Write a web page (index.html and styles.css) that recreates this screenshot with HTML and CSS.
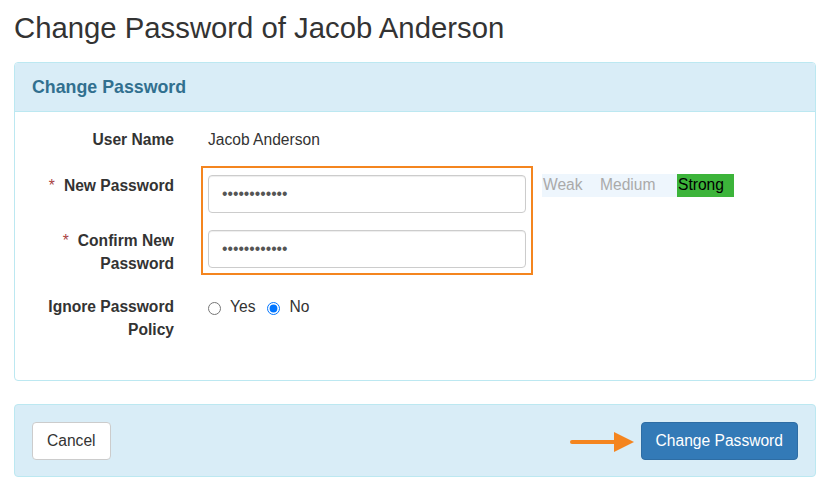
FILE: index.html
```html
<!DOCTYPE html>
<html lang="en">
<head>
<meta charset="utf-8">
<title>Change Password</title>
<link rel="stylesheet" href="styles.css">
</head>
<body>
<div class="page">
  <h1 class="title">Change Password of Jacob Anderson</h1>

  <div class="panel">
    <div class="panel-heading">Change Password</div>
    <div class="panel-body">
      <div class="row row-static">
        <div class="label">User Name</div>
        <div class="value">Jacob Anderson</div>
      </div>
      <div class="row">
        <div class="label"><span class="req">*</span>New Password</div>
        <input class="input" type="password" value="abcdefghijkl">
        <div class="meter">
          <span class="seg seg-weak">Weak</span>
          <span class="seg seg-medium">Medium</span>
          <span class="seg seg-strong">Strong</span>
        </div>
      </div>
      <div class="row row-confirm">
        <div class="label"><span class="req">*</span>Confirm New Password</div>
        <input class="input" type="password" value="abcdefghijkl">
      </div>
      <div class="row row-radio">
        <div class="label">Ignore Password Policy</div>
        <div class="radios">
          <label class="radio"><input type="radio" name="ignore"><span>Yes</span></label>
          <label class="radio"><input type="radio" name="ignore" checked><span>No</span></label>
        </div>
      </div>
      <div class="highlight"></div>
    </div>
  </div>

  <div class="footer">
    <button class="btn btn-default" type="button">Cancel</button>
    <button class="btn btn-primary" type="button">Change Password</button>
    <svg class="arrow" width="70" height="24" viewBox="0 0 70 24">
      <line x1="5" y1="12" x2="50" y2="12" stroke="#f4851f" stroke-width="4" stroke-linecap="round"/>
      <polygon points="47,2 67,12 47,22" fill="#f4851f"/>
    </svg>
  </div>
</div>
</body>
</html>
```

FILE: styles.css
```css
html, body {
  margin: 0;
  padding: 0;
  background: #fff;
}

body {
  font-family: "Liberation Sans", Arial, Helvetica, sans-serif;
  font-size: 15.6px;
  color: #333;
}

.page {
  width: 802px;
  padding: 0 15px 0 14px;
}

.title {
  margin: 11px 0 17px 0;
  font-size: 29.3px;
  line-height: 34px;
  font-weight: normal;
  color: #333;
}

.panel {
  border: 1px solid #bce8f1;
  border-radius: 4px;
  background: #fff;
}

.panel-heading {
  height: 48px;
  display: flex;
  align-items: center;
  padding: 0 17px;
  background: #d9edf7;
  border-bottom: 1px solid #bce8f1;
  border-radius: 3px 3px 0 0;
  color: #31708f;
  font-weight: bold;
  font-size: 17.8px;
}

.panel-body {
  position: relative;
  padding: 17px 15px 39px 15px;
  display: flex;
  flex-direction: column;
  gap: 16px;
}

.row {
  display: flex;
  align-items: flex-start;
}

.row-static {
  min-height: 30px;
}

.row-confirm {
  margin-top: 1px;
}

.label {
  width: 144px;
  margin-right: 34px;
  flex: none;
  text-align: right;
  font-weight: bold;
  line-height: 22.5px;
}

.row-radio {
  padding-top: 5px;
}

.req {
  color: #a94442;
  font-weight: normal;
  margin-right: 9px;
}

.value {
  line-height: 22.5px;
}

.input {
  box-sizing: border-box;
  width: 318px;
  height: 38px;
  margin: 0;
  padding: 0 13px;
  border: 1px solid #ccc;
  border-radius: 4px;
  font-family: "Liberation Sans", Arial, sans-serif;
  font-size: 15.6px;
  color: #555;
  background: #fff;
  box-shadow: inset 0 1px 1px rgba(0,0,0,0.075);
  outline: none;
}

.meter {
  margin-left: 16px;
  display: flex;
  background: #eef6fd;
  height: 23px;
  margin-top: -1px;
}

.seg {
  box-sizing: border-box;
  display: block;
  height: 23px;
  line-height: 21px;
  padding: 0 0 2px 1px;
  color: #aaa;
}

.seg-weak { width: 57px; }
.seg-medium { width: 78px; }
.seg-strong {
  width: 57px;
  background: #3cb43a;
  color: #000;
}

.radios {
  display: flex;
  align-items: center;
  height: 22.5px;
}

.radio {
  display: flex;
  align-items: center;
  margin-right: 12px;
}

.radio input {
  width: 13px;
  height: 13px;
  margin: 3px 9px 0 0;
}

.highlight {
  position: absolute;
  left: 186px;
  top: 54px;
  width: 332px;
  height: 109px;
  box-sizing: border-box;
  border: 2px solid #f4851f;
  pointer-events: none;
}

.footer {
  position: relative;
  margin-top: 23px;
  display: flex;
  justify-content: space-between;
  align-items: center;
  padding: 17px 17px 16px 17px;
  background: #d9edf7;
  border: 1px solid #bce8f1;
  border-radius: 4px;
}

.btn {
  box-sizing: border-box;
  height: 38px;
  padding: 0 14px;
  border-radius: 4px;
  font-family: "Liberation Sans", Arial, sans-serif;
  font-size: 15.6px;
  line-height: 36px;
  cursor: pointer;
}

.btn-default {
  background: #fff;
  border: 1px solid #ccc;
  color: #333;
}

.btn-primary {
  background: #337ab7;
  border: 1px solid #2e6da4;
  color: #fff;
}

.arrow {
  position: absolute;
  left: 552px;
  top: 25px;
}
```
